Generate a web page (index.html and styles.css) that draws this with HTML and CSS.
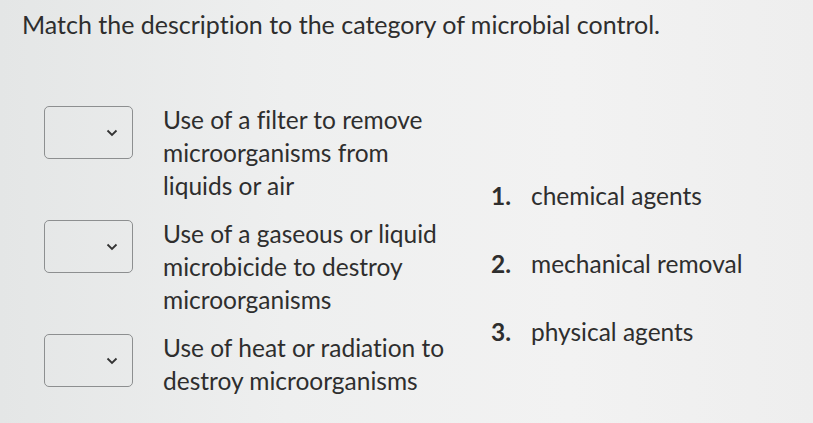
FILE: index.html
```html
<!DOCTYPE html>
<html>
	<head>
		<meta charset="utf-8">
		<title>Matching question</title>
		<link rel="stylesheet" href="styles.css">
	</head>
	<body>
		<div class="question">
			<p class="prompt">Match the description to the category of microbial control.</p>

			<div class="matching">
				<div class="pairs">
					<div class="pair">
						<div class="picker">
							<svg width="12" height="8" viewBox="0 0 12 8"><path d="M1.5 1.5 L6 6 L10.5 1.5" fill="none" stroke="#333" stroke-width="1.8"/></svg>
						</div>
						<p class="desc">Use of a filter to remove microorganisms from liquids or air</p>
					</div>
					<div class="pair">
						<div class="picker">
							<svg width="12" height="8" viewBox="0 0 12 8"><path d="M1.5 1.5 L6 6 L10.5 1.5" fill="none" stroke="#333" stroke-width="1.8"/></svg>
						</div>
						<p class="desc">Use of a gaseous or liquid microbicide to destroy microorganisms</p>
					</div>
					<div class="pair">
						<div class="picker">
							<svg width="12" height="8" viewBox="0 0 12 8"><path d="M1.5 1.5 L6 6 L10.5 1.5" fill="none" stroke="#333" stroke-width="1.8"/></svg>
						</div>
						<p class="desc">Use of heat or radiation to destroy microorganisms</p>
					</div>
				</div>

				<ol class="choices">
					<li>chemical agents</li>
					<li>mechanical removal</li>
					<li>physical agents</li>
				</ol>
			</div>
		</div>
	</body>
</html>
```
FILE: styles.css
```css
body {
	margin: 0;
	height: 423px;
	overflow: hidden;
	font-family: Lato, "Open Sans", sans-serif;
	font-variant-ligatures: none;
	color: #2e2e2e;
	background: linear-gradient(90deg, #e4e6e6 0%, #eeefef 35%, #f2f2f2 70%, #eeeeee 100%);
}

.question { padding: 7px 0 0 22px; }

.prompt {
	margin: 0;
	font-size: 25px;
	line-height: 34px;
}

.matching {
	display: flex;
	margin-top: 62px;
}

.pairs {
	width: 455px;
	display: flex;
	flex-direction: column;
	gap: 15px;
}

.pair { display: flex; align-items: flex-start; }

.picker {
	width: 89px;
	height: 53px;
	box-sizing: border-box;
	margin: 3px 30px 0 22px;
	border: 1.5px solid #8d8f90;
	border-radius: 5px;
	display: flex;
	align-items: center;
	justify-content: flex-end;
	padding-right: 14px;
	flex-shrink: 0;
}

.desc {
	margin: 0;
	width: 292px;
	font-size: 24.5px;
	line-height: 33px;
}

.choices {
	margin: 78px 0 0 0;
	padding: 0 0 0 40px;
	font-size: 24.5px;
	line-height: 30px;
}

.choices li { margin-bottom: 38px; padding-left: 14px; }
.choices li::marker { font-weight: bold; }
```
